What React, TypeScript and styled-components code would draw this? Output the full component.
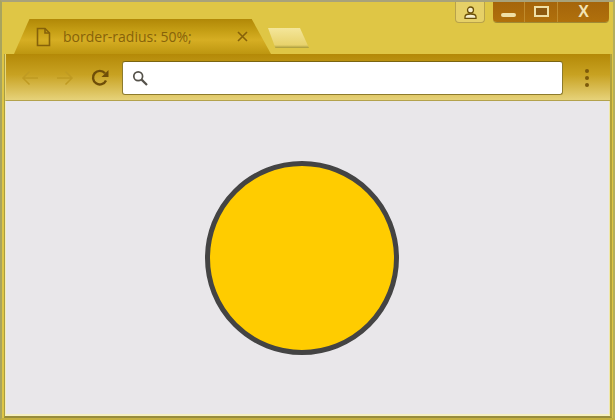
import React from 'react';
import styled, { createGlobalStyle } from 'styled-components';

const Global = createGlobalStyle`
  html, body { margin: 0; padding: 0; background: #e8e6ea; }
  #root { width: 615px; height: 420px; overflow: hidden; }
`;

const Win = styled.div`
  box-sizing: border-box;
  width: 615px;
  height: 420px;
  display: flex;
  flex-direction: column;
  font-family: "Open Sans", "Liberation Sans", sans-serif;
  background: #dfc645;
  border-top: 2px solid #a8a27a;
  border-left: 2px solid #a8a45e;
  border-right: 2px solid #b5ae5c;
  border-bottom: 2px solid #c4b040;
`;

const TitleBar = styled.div`
  height: 52px;
  flex: none;
  display: flex;
  padding-left: 12px;
  padding-right: 4px;
`;

const Tab = styled.div`
  box-sizing: border-box;
  width: 257px;
  height: 35px;
  margin-top: 17px;
  flex: none;
  padding: 0 23px 0 22px;
  display: flex;
  align-items: center;
  clip-path: polygon(0 100%, 6% 0, 92.5% 0, 100% 100%);
  background: linear-gradient(#b18807 0%, #c69f15 35%, #d6ae23 60%, #bd9610 100%);
  color: #86620a;
  font-size: 14px;
`;

const TabTitle = styled.span`
  margin-left: 12px;
  flex: 1;
  white-space: nowrap;
`;

const NewTab = styled.div`
  width: 41px;
  height: 20px;
  margin: 26px 0 0 -3px;
  flex: none;
  clip-path: polygon(0 0, 78% 0, 100% 100%, 18% 100%);
  background: linear-gradient(#f4e69a 0%, #e8d26c 85%, #a89a3a 100%);
`;

const Spacer = styled.div`
  flex: 1;
`;

const ProfileBtn = styled.div`
  box-sizing: border-box;
  width: 30px;
  height: 21px;
  margin-right: 8px;
  flex: none;
  display: flex;
  align-items: center;
  justify-content: center;
  border: 1px solid #b8a24a;
  border-top: 0;
  border-radius: 0 0 4px 4px;
  background: #e6d067;
`;

const Controls = styled.div`
  height: 20px;
  display: flex;
  flex: none;
  border-radius: 0 0 4px 4px;
  overflow: hidden;
  background: linear-gradient(#a5650a, #b0700c);
  box-shadow: 0 1px 0 #a08a35;
`;

const Ctl = styled.div<{ $w: number }>`
  width: ${p => p.$w}px;
  display: flex;
  align-items: center;
  justify-content: center;
  border-left: 1px solid #c08b2c;
  &:first-child { border-left: 0; }
`;

const MinGlyph = styled.span`
  width: 15px;
  height: 4px;
  margin-top: 6px;
  background: #efe0a6;
  border-radius: 2px;
`;

const MaxGlyph = styled.span`
  box-sizing: border-box;
  width: 15px;
  height: 11px;
  margin-top: -1px;
  border: 2px solid #efe0a6;
  background: #8d5a10;
`;

const CloseGlyph = styled.span`
  font-family: "Liberation Sans", sans-serif;
  font-weight: 700;
  font-size: 16px;
  color: #f1e3b4;
`;

const Viewport = styled.div`
  flex: 1;
  display: flex;
  flex-direction: column;
  margin: 0 1px 0 2px;
  border-left: 1px solid #a89c45;
  border-right: 2px solid #b0a03c;
  border-bottom: 2px solid #978c3c;
`;

const Toolbar = styled.div`
  box-sizing: border-box;
  height: 47px;
  flex: none;
  display: flex;
  align-items: center;
  padding: 2px 0 0 6px;
  background: linear-gradient(#b48907 0%, #c8a222 45%, #e6d27a 100%);
  border-bottom: 1px solid #b3a24c;
  border-left: 1px solid #e8d777;
`;

const NavBtn = styled.div`
  width: 35px;
  display: flex;
  justify-content: center;
  flex: none;
`;

const Omni = styled.div`
  box-sizing: border-box;
  width: 441px;
  height: 34px;
  margin-left: 5px;
  flex: none;
  display: flex;
  align-items: center;
  padding-left: 9px;
  background: #fff;
  border: 1px solid #8d7b2c;
  border-top-color: #7a6410;
  border-radius: 3px;
`;

const Menu = styled.div`
  flex: 1;
  display: flex;
  flex-direction: column;
  align-items: center;
  gap: 3px;
`;

const Dot = styled.span`
  width: 4px;
  height: 4px;
  border-radius: 50%;
  background: #7d5a0a;
`;

const Content = styled.div`
  flex: 1;
  display: flex;
  align-items: center;
  padding-left: 199px;
  background: #e9e7ea;
  border-left: 1px solid #f5eeb8;
  border-bottom: 2px solid #f6f0c0;
  border-right: 1px solid #f0e8a8;
`;

const Circle = styled.div`
  box-sizing: border-box;
  width: 194px;
  height: 194px;
  border-radius: 50%;
  background: #ffcc00;
  border: 5px solid #444444;
`;

export default function App() {
  return (
    <Win>
      <Global />
      <TitleBar>
        <Tab>
          <svg width="15" height="20" viewBox="0 0 15 20" fill="none" stroke="#86620a" strokeWidth="1.6">
            <path d="M1.5 1.5h7.5l4.5 4.5v12.5h-12z" />
            <path d="M9 1.5v4.5h4.5" />
          </svg>
          <TabTitle>border-radius: 50%;</TabTitle>
          <svg width="11" height="11" viewBox="0 0 11 11" stroke="#86620a" strokeWidth="1.6">
            <path d="M1 1l9 9M10 1l-9 9" />
          </svg>
        </Tab>
        <NewTab />
        <Spacer />
        <ProfileBtn>
          <svg width="13" height="13" viewBox="0 0 13 13" fill="#f7f0cf" stroke="#6b4f08" strokeWidth="1.3">
            <circle cx="6.5" cy="4" r="3" />
            <path d="M1 12.3v-1.6c0-1.6 2.5-2.7 5.5-2.7s5.5 1.1 5.5 2.7v1.6z" />
          </svg>
        </ProfileBtn>
        <Controls>
          <Ctl $w={31}><MinGlyph /></Ctl>
          <Ctl $w={32}><MaxGlyph /></Ctl>
          <Ctl $w={51}><CloseGlyph>X</CloseGlyph></Ctl>
        </Controls>
      </TitleBar>
      <Viewport>
        <Toolbar>
          <NavBtn>
            <svg width="18" height="16" viewBox="0 0 18 16" fill="none" stroke="#bf9a22" strokeWidth="1.5">
              <path d="M17 8H2M8.5 1.5L2 8l6.5 6.5" />
            </svg>
          </NavBtn>
          <NavBtn>
            <svg width="18" height="16" viewBox="0 0 18 16" fill="none" stroke="#bf9a22" strokeWidth="1.5">
              <path d="M1 8h15M9.5 1.5L16 8l-6.5 6.5" />
            </svg>
          </NavBtn>
          <NavBtn>
            <svg width="18" height="18" viewBox="0 0 18 18" fill="none">
              <path d="M15 11.5A6.8 6.8 0 1 1 14 4.2" stroke="#6f4e08" strokeWidth="2.4" />
              <path d="M17.5 1v7h-7z" fill="#6f4e08" />
            </svg>
          </NavBtn>
          <Omni>
            <svg width="16" height="16" viewBox="0 0 16 16" fill="none" stroke="#55524a">
              <circle cx="6.2" cy="6.2" r="4.4" strokeWidth="1.7" />
              <path d="M9.6 9.6L15 15" strokeWidth="2.2" />
            </svg>
          </Omni>
          <Menu>
            <Dot />
            <Dot />
            <Dot />
          </Menu>
        </Toolbar>
        <Content>
          <Circle />
        </Content>
      </Viewport>
    </Win>
  );
}
